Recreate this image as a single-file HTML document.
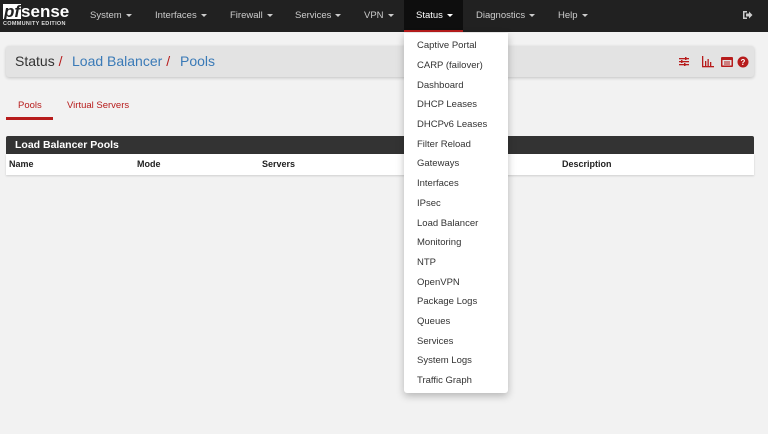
<!DOCTYPE html>
<html><head><meta charset="utf-8"><style>
*{box-sizing:border-box;margin:0;padding:0}
body{width:768px;height:434px;background:#f2f2f2;font-family:"Liberation Sans",sans-serif;font-size:9px;color:#222;position:relative;overflow:hidden}
.nav{position:absolute;left:0;top:0;width:768px;height:32px;background:#212121}
.nav .it{position:absolute;top:0;height:32px;line-height:31px;color:#ccc;font-size:9.5px}
.caret{display:inline-block;border-top:3px solid currentColor;border-left:3px solid transparent;border-right:3px solid transparent;vertical-align:middle;margin-left:4px}
.logo{position:absolute;left:3px;top:4px;color:#fff}
.bc{position:absolute;left:6px;top:46px;width:748px;height:31px;background:#e3e3e3;border-radius:3px;box-shadow:0 1px 3px rgba(0,0,0,.2)}
.bc span{position:absolute;top:7px;font-size:14px}
.tabs{position:absolute;top:100px;font-size:9.5px;color:#b71c1c}
.th{position:absolute;left:6px;top:136px;width:748px;height:18px;background:#333;color:#fff;font-weight:bold;font-size:10.5px;line-height:19px;padding-left:9px;border-radius:2px 2px 0 0}
.tr{position:absolute;left:6px;top:154px;width:748px;height:21px;background:#fff;font-weight:bold;font-size:9px;line-height:20px;box-shadow:0 1px 2px rgba(0,0,0,.15)}
.tr span{position:absolute}
.dd{position:absolute;left:404px;top:33px;width:104px;height:360px;background:#fff;box-shadow:0 3px 8px rgba(0,0,0,.25);border-radius:0 0 3px 3px}
.dd div{position:absolute;left:13px;font-size:9.5px;color:#333}
</style></head><body>
<div class="nav">
<div class="logo"><span style="font-size:17px;font-weight:bold;font-style:italic;background:#fff;color:#212121;padding:0 1px;line-height:15px;display:inline-block">pf</span><span style="font-size:17px;font-weight:bold;line-height:15px">sense</span><div style="font-size:5.5px;font-weight:bold;letter-spacing:.3px;margin-top:2px;color:#ddd">COMMUNITY EDITION</div></div>
<div class="it" style="left:90px">System<span class="caret"></span></div>
<div class="it" style="left:155px">Interfaces<span class="caret"></span></div>
<div class="it" style="left:230px">Firewall<span class="caret"></span></div>
<div class="it" style="left:295px">Services<span class="caret"></span></div>
<div class="it" style="left:364px">VPN<span class="caret"></span></div>
<div style="position:absolute;left:404px;top:0;width:59px;height:32px;background:#0e0e0e;border-bottom:2px solid #b71c1c"></div>
<div class="it" style="left:416px;color:#fff">Status<span class="caret"></span></div>
<div class="it" style="left:476px">Diagnostics<span class="caret"></span></div>
<div class="it" style="left:558px">Help<span class="caret"></span></div>
<svg style="position:absolute;left:742px;top:10px" width="11" height="10"><path d="M1 1h4v1.5H2.5v5H5V9H1z" fill="#ccc"/><path d="M4 3.5h3V1.5l3.5 3.5L7 8.5v-2H4z" fill="#ccc"/></svg>
</div>
<div class="bc">
<span style="left:9px;color:#333">Status <span style="position:static;color:#b71c1c">/</span></span>
<span style="left:66px;color:#3a7ab7">Load Balancer <span style="position:static;color:#b71c1c">/</span></span>
<span style="left:174px;color:#3a7ab7">Pools</span>
<svg style="position:absolute;left:673px;top:10px" width="70" height="12"><g fill="#b71c1c"><rect x="0" y="2" width="10" height="1.3"/><rect x="0" y="5" width="10" height="1.3"/><rect x="0" y="8" width="10" height="1.3"/><rect x="6" y="1" width="1.5" height="3"/><rect x="2" y="4" width="1.5" height="3"/><rect x="5" y="7" width="1.5" height="3"/>
<rect x="23" y="0" width="1.3" height="11"/><rect x="23" y="10" width="12" height="1.3"/><rect x="26" y="5" width="1.3" height="5"/><rect x="28.5" y="3" width="1.3" height="7"/><rect x="31" y="6" width="1.3" height="4"/>
<rect x="42" y="1" width="12" height="10" rx="1"/><rect x="43.5" y="4" width="9" height="5.5" fill="#e3e3e3"/><rect x="45" y="5.5" width="6" height="1" /><rect x="45" y="7.5" width="6" height="1"/>
<circle cx="64" cy="6" r="5.5"/></g><text x="64" y="9" font-size="8" font-weight="bold" fill="#fff" text-anchor="middle" font-family="Liberation Sans">?</text></svg>
</div>
<div class="tabs" style="left:18px">Pools</div>
<div style="position:absolute;left:6px;top:117px;width:47px;height:3px;background:#b71c1c"></div>
<div class="tabs" style="left:67px">Virtual Servers</div>
<div class="th">Load Balancer Pools</div>
<div class="tr"><span style="left:3px">Name</span><span style="left:131px">Mode</span><span style="left:256px">Servers</span><span style="left:556px">Description</span></div>
<div class="dd">
<div style="top:7px">Captive Portal</div><div style="top:27px">CARP (failover)</div><div style="top:47px">Dashboard</div><div style="top:66px">DHCP Leases</div><div style="top:86px">DHCPv6 Leases</div><div style="top:106px">Filter Reload</div><div style="top:125px">Gateways</div><div style="top:145px">Interfaces</div><div style="top:165px">IPsec</div><div style="top:185px">Load Balancer</div><div style="top:204px">Monitoring</div><div style="top:224px">NTP</div><div style="top:244px">OpenVPN</div><div style="top:263px">Package Logs</div><div style="top:283px">Queues</div><div style="top:303px">Services</div><div style="top:322px">System Logs</div><div style="top:342px">Traffic Graph</div>
</div>
</body></html>
